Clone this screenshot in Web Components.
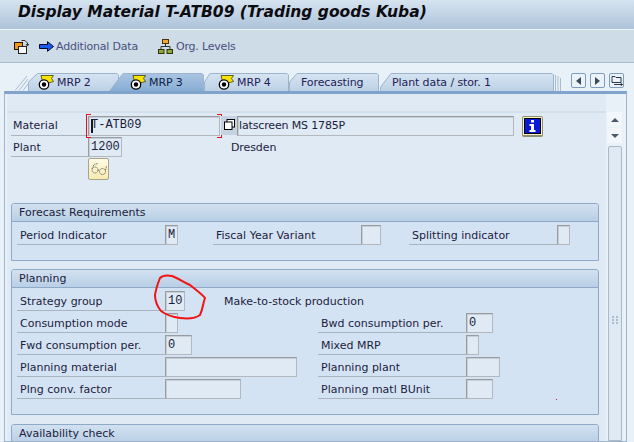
<!DOCTYPE html>
<html>
<head>
<meta charset="utf-8">
<style>
  html, body { margin: 0; padding: 0; width: 634px; height: 442px; overflow: hidden; background: #e8f0f8; }
  body { font: 11px "DejaVu Sans", sans-serif; color: #1c1c3c; }
</style>
</head>
<body>
<sap-screen>
  <sap-title slot="title">Display Material T-ATB09 (Trading goods Kuba)</sap-title>
  <sap-toolbar slot="toolbar"></sap-toolbar>
  <sap-tabs slot="tabs"></sap-tabs>
  <sap-header-block></sap-header-block>
  <sap-group heading="Forecast Requirements" style="height:58px">
    <div style="display:flex;padding-left:5px">
      <sap-field label="Period Indicator" w="13" value="M"></sap-field>
      <sap-field label="Fiscal Year Variant" w="20" style="margin-left:35px"></sap-field>
      <sap-field label="Splitting indicator" w="13" style="margin-left:28px"></sap-field>
    </div>
  </sap-group>
  <sap-group heading="Planning" style="height:146px;margin-top:8px">
    <div style="display:grid;grid-template-columns:301px 1fr;grid-auto-rows:22px;padding-left:5px">
      <div style="grid-column:1/3;display:flex">
        <sap-field label="Strategy group" w="20" value="10"></sap-field>
        <div style="margin-left:39px;line-height:22px">Make-to-stock production</div>
      </div>
      <sap-field label="Consumption mode" w="13"></sap-field>
      <sap-field label="Bwd consumption per." w="27" value="0"></sap-field>
      <sap-field label="Fwd consumption per." w="27" value="0"></sap-field>
      <sap-field label="Mixed MRP" w="13"></sap-field>
      <sap-field label="Planning material" w="132"></sap-field>
      <sap-field label="Planning plant" w="34"></sap-field>
      <sap-field label="Plng conv. factor" w="76"></sap-field>
      <sap-field label="Planning matl BUnit" w="27"></sap-field>
    </div>
  </sap-group>
  <sap-group heading="Availability check" style="height:30px;margin-top:9px"></sap-group>
</sap-screen>
<sap-mark></sap-mark>
<script>
function shadow(el, html) {
  el.attachShadow({ mode: "open" });
  el.shadowRoot.innerHTML = html;
}

const INPUT_CSS = `
  height: 20px; box-sizing: border-box; flex: none; background: #dfeaf4;
  border: 1px solid #b4b8bc; border-top-color: #979ca1; border-left-color: #979ca1;
  box-shadow: inset 1px 1px 0 #c6ced6;
  overflow: hidden; white-space: nowrap;
`;
const MONO = `"Liberation Mono", monospace`;

class SapScreen extends HTMLElement {
  constructor() {
    super();
    shadow(this, `
      <style>
        :host { display: block; width: 634px; height: 442px; overflow: hidden; }
        .panel {
          margin-left: 4px; width: 623px; height: 351px; box-sizing: border-box;
          background: #dfeaf5; border: 1px solid #9fb4cb; border-top: 3px solid #7fa3cb;
          display: flex; overflow: hidden;
        }
        .stripe { width: 2px; flex: none; background: #e8f0f8; }
        .body { width: 599px; flex: none; }
        .top { height: 17px; border-bottom: 2px solid #d2e0ee; }
        .inner { padding: 0 0 0 4px; width: 588px; }
      </style>
      <slot name="title"></slot>
      <slot name="toolbar"></slot>
      <slot name="tabs"></slot>
      <div class="panel">
        <div class="stripe"></div>
        <div class="body">
          <div class="top"></div>
          <div class="inner"><slot></slot></div>
        </div>
        <sap-scroll></sap-scroll>
      </div>`);
  }
}

class SapTitle extends HTMLElement {
  constructor() {
    super();
    shadow(this, `
      <style>
        :host {
          display: block; height: 30px; box-sizing: border-box; padding-left: 18px;
          background: linear-gradient(#d6e3f0, #adc3da);
          border-bottom: 1px solid #eef4fa;
          font: italic bold 15.5px/25px "DejaVu Sans", sans-serif; color: #0c0c10; white-space: nowrap;
        }
      </style><slot></slot>`);
  }
}

class SapToolbar extends HTMLElement {
  constructor() {
    super();
    shadow(this, `
      <style>
        :host {
          display: flex; align-items: center; height: 33px; box-sizing: border-box;
          background: #cedce8; border-bottom: 1px solid #a9bdd0; padding-left: 14px; color: #4a4e7c;
        }
        svg { display: block; flex: none; }
        span { letter-spacing: -.2px; }
      </style>
      <svg width="15" height="16" viewBox="0 0 15 16" style="margin-right:10px">
        <rect x=".5" y="4.500" width="8" height="7" fill="#f09a18" stroke="#201000"/>
        <rect x="4.500" y="8.500" width="8" height="7" fill="#f6f6f6" stroke="#202020"/>
        <path d="M7.500 2.500h3.500l2.500 2.500v2.500M12 6l1.500 2 1.500-2" fill="none" stroke="#303030"/>
      </svg>
      <svg width="15" height="11" viewBox="0 0 15 11">
        <path d="M.5 3.500h8V.7l6 4.800-6 4.800V7.500h-8z" fill="#1a5cf0" stroke="#000030"/>
      </svg>
      <span style="margin-left:2px">Additional Data</span>
      <svg width="15" height="15" viewBox="0 0 15 15" style="margin-left:20px">
        <rect x="4.500" y=".5" width="6" height="4" fill="#f0a830" stroke="#503000"/>
        <path d="M7.500 5v3M3 11V7.500h9V11" fill="none" stroke="#303030"/>
        <rect x=".5" y="10.500" width="5.500" height="4" fill="#90a838" stroke="#303000"/>
        <rect x="9" y="10.500" width="5.500" height="4" fill="#90a838" stroke="#303000"/>
      </svg>
      <span style="margin-left:3px">Org. Levels</span>`);
  }
}

class SapTabs extends HTMLElement {
  constructor() {
    super();
    // label, width, overlap with previous, corner dx, corner dy, padding, has icon, active
    const tab = (label, w, ml, dx, dy, pad, icon, active) => {
      const g = active ? "a" : "i";
      return `
      <div class="tab ${active ? "on" : ""}" style="width:${w}px;margin-left:${ml}px;padding-left:${pad}px">
        <svg class="bg" width="${w}" height="18"><path d="M.5 18V${dy}L${dx} .5H${w - 2}L${w - .5} 2V18" fill="url(#${g})" stroke="#9db4cc"/></svg>
        ${icon ? `<svg class="ic" width="16" height="15" viewBox="0 0 16 15"><path d="M3 .5H15.500L13.500 3.500 15.500 6.500 10 8V9H5z" fill="#f6e400" stroke="#302800" stroke-width=".7"/><circle cx="6" cy="9.500" r="4.700" fill="#fff" stroke="#000" stroke-width="1.300"/><circle cx="6" cy="9.500" r="2.200" fill="#000"/></svg>` : ""}
        <span>${label}</span>
      </div>`;
    };
    shadow(this, `
      <style>
        :host { display: flex; height: 28px; box-sizing: border-box; padding: 10px 10px 0 15px; align-items: flex-start; }
        .defs { width: 0; height: 0; position: absolute; }
        .tab {
          height: 18px; box-sizing: border-box; flex: none; position: relative;
          display: flex; align-items: center; gap: 3px; white-space: nowrap; color: #241c58;
        }
        .tab span { position: relative; letter-spacing: -.1px; }
        .tab .ic { position: relative; }
        .tab .bg { position: absolute; left: 0; top: 0; }
        .on { z-index: 1; color: #102048; }
        .stack { display: block; flex: none; }
        .nav { margin-left: auto; display: flex; gap: 4px; }
        .nav div {
          width: 15px; height: 15px; box-sizing: border-box; background: #ecf2f9;
          border: 1px solid #7f9cc0; border-radius: 2px;
          display: flex; align-items: center; justify-content: center;
        }
      </style>
      <svg class="defs"><defs>
        <linearGradient id="i" x1="0" y1="0" x2="0" y2="1"><stop offset="0" stop-color="#d6e4f2"/><stop offset="1" stop-color="#bdd1e6"/></linearGradient>
        <linearGradient id="a" x1="0" y1="0" x2="0" y2="1"><stop offset="0" stop-color="#aac5e2"/><stop offset="1" stop-color="#88add3"/></linearGradient>
      </defs></svg>
      <svg class="stack" width="13" height="18"><path d="M0 17.500 12 3M4 17.500 13 6M8 17.500 13 11" fill="none" stroke="#a9bcd2"/></svg>
      ${tab("MRP 2", 91, 0, 9.5, 9, 10, true)}
      ${tab("MRP 3", 95, -10, 14, 18, 21, true, true)}
      ${tab("MRP 4", 85, 0, 6, 9, 14, true)}
      ${tab("Forecasting", 90, 0, 8, 9, 12)}
      ${tab("Plant data / stor. 1", 174, 1, 11, 14, 12)}
      <svg class="stack" width="7" height="18"><path d="M1.500 2V18M4 3V18M6.500 5V18" fill="none" stroke="#a9bcd2"/></svg>
      <div class="nav">
        <div><svg width="5" height="8"><path d="M5 0v8L0 4z" fill="#3c4a5c"/></svg></div>
        <div><svg width="5" height="8"><path d="M0 0v8l5-4z" fill="#3c4a5c"/></svg></div>
        <div><svg width="12" height="11" viewBox="0 0 12 11"><path d="M1 3.500V1.500h3l1 1h5v5H1zM3 9.500h8.500M9.500 8l2 1.500-2 1.500" fill="none" stroke="#2c3844"/></svg></div>
      </div>`);
  }
}

class SapHeaderBlock extends HTMLElement {
  constructor() {
    super();
    shadow(this, `
      <style>
        :host { display: block; height: 90px; padding-top: 3px; box-sizing: border-box; }
        .row { display: flex; height: 21px; align-items: flex-start; }
        .lab { width: 77px; height: 20px; line-height: 19px; border-bottom: 1px solid #aab4bf; box-sizing: border-box; padding-left: 2px; flex: none; }
        .inp { ${INPUT_CSS} font: 12px/17px ${MONO}; padding-left: 2px; }
        .mat { width: 132px; position: relative; overflow: visible; }
        .mat::before { content: ""; position: absolute; left: -3px; top: -3px; width: 5px; height: 24px; border: solid #e01020; border-width: 1px 0 1px 1px; box-sizing: border-box; }
        .mat::after { content: ""; position: absolute; right: -3px; top: -3px; width: 5px; height: 24px; border: solid #e01020; border-width: 1px 1px 1px 0; box-sizing: border-box; }
        .caret { position: absolute; left: 2px; top: 2px; width: 2px; height: 14px; background: #10182c; }
        .copy { width: 16px; height: 19px; flex: none; background: #c4d2e2; display: flex; align-items: flex-start; justify-content: center; padding-top: 3px; box-sizing: border-box; margin-left: 1px; position: relative; }
        .desc { width: 277px; font: 11px/18px "DejaVu Sans", sans-serif; padding-left: 1px; letter-spacing: -.15px; }
        .info { width: 21px; height: 21px; box-sizing: border-box; margin-left: 8px; background: #fbf3c4; border: 1px solid #8f8f70; border-bottom-width: 2px; border-radius: 2px; display: flex; align-items: center; justify-content: center; }
        .glasses { display: flex; align-items: center; justify-content: center; width: 21px; height: 22px; box-sizing: border-box; margin-left: 77px; background: linear-gradient(#fffbe6, #f8eab0); border: 1px solid #a8a48c; border-radius: 2px; }
        .dres { margin-left: 109px; line-height: 21px; letter-spacing: -.1px; }
        .p .lab { line-height: 21px; }
        .p .inp { line-height: 19px; }
      </style>
      <div class="row">
        <div class="lab">Material</div>
        <div class="inp mat">T-ATB09<i class="caret"></i></div>
        <div class="copy"><svg width="11" height="11" viewBox="0 0 11 11"><rect x="3" y=".5" width="7.500" height="7.500" fill="#fff" stroke="#000"/><rect x=".5" y="3" width="7.500" height="7.500" fill="#fff" stroke="#000"/></svg></div>
        <div class="inp desc">latscreen MS 1785P</div>
        <div class="info"><svg width="17" height="16" viewBox="0 0 17 16"><rect width="17" height="16" fill="#000"/><rect x="1" y="1" width="15" height="14" fill="#0a18d8"/><path d="M7 2h3v2.500H7zM5.500 6H10v6h1.500v2h-6v-2H7V8H5.500z" fill="#fff"/></svg></div>
      </div>
      <div class="row p">
        <div class="lab">Plant</div>
        <div class="inp" style="width:34px">1200</div>
        <div class="dres">Dresden</div>
      </div>
      <div class="glasses"><svg width="17" height="13" viewBox="0 0 17 13"><g fill="none" stroke="#77736a" stroke-dasharray="1.200 .5"><circle cx="5" cy="7" r="3"/><circle cx="12.500" cy="8.500" r="3"/><path d="M8 7 9.500 7.500M15.500 7 16.500 3M2 6 4 1.500 8 .5"/></g></svg></div>`);
  }
}

class SapGroup extends HTMLElement {
  constructor() {
    super();
    shadow(this, `
      <style>
        :host { display: block; box-sizing: border-box; border: 1px solid #8fa9c8; border-radius: 3px 3px 0 0; background: #d4e3f4; overflow: hidden; width: 588px; }
        .h { height: 18px; box-sizing: border-box; line-height: 18px; padding-left: 7px; background: linear-gradient(#d2e1f0, #b9cfe6); border-bottom: 1px solid #8fa9c8; }
        .b { padding-top: 3px; }
      </style>
      <div class="h"></div>
      <div class="b"><slot></slot></div>`);
    this.shadowRoot.querySelector(".h").textContent = this.getAttribute("heading");
  }
}

class SapField extends HTMLElement {
  constructor() {
    super();
    const w = this.getAttribute("w");
    shadow(this, `
      <style>
        :host { display: flex; align-items: flex-start; height: 20px; flex: none; }
        .l { box-sizing: border-box; width: 148px; height: 20px; line-height: 21px; padding-left: 3px; border-bottom: 1px solid #aab4bf; flex: none; overflow: hidden; }
        .i { ${INPUT_CSS} font: 12px/19px ${MONO}; padding-left: 2px; }
      </style>
      <div class="l">${this.getAttribute("label")}</div>
      <div class="i" style="width:${w}px">${this.getAttribute("value") || ""}</div>`);
  }
}

class SapScroll extends HTMLElement {
  constructor() {
    super();
    shadow(this, `
      <style>
        :host { display: flex; flex-direction: column; width: 20px; flex: none; box-sizing: border-box; padding: 18px 0 0 1px; background: #e8f0f8; }
        .b { width: 15px; height: 15px; background: #f2f6fb; margin-bottom: 1px; display: flex; align-items: center; justify-content: center; }
        .t { width: 14px; flex: 1; box-sizing: border-box; margin: 2px 0 0 1px; background: #dfe9f3; border: 1px solid #a9b9ca; border-radius: 2px 2px 0 0; display: flex; justify-content: center; padding-top: 169px; }
      </style>
      <div class="b"><svg width="8" height="4"><path d="M0 4 4 0l4 4z" fill="#4a5868"/></svg></div>
      <div class="b"><svg width="8" height="4"><path d="M0 0l4 4 4-4z" fill="#4a5868"/></svg></div>
      <div class="t"><svg width="6" height="8"><path d="M0 0h2v2H0zM4 0h2v2H4zM0 3h2v2H0zM4 3h2v2H4zM0 6h2v2H0zM4 6h2v2H4z" fill="#a9bccf"/></svg></div>`);
  }
}

// hand drawn circle around strategy group, lies over the form
class SapMark extends HTMLElement {
  constructor() {
    super();
    shadow(this, `
      <style>
        :host { position: absolute; left: 0; top: 0; width: 634px; height: 442px; pointer-events: none; }
        svg { display: block; }
      </style>
      <svg width="634" height="442">
        <path d="M160 278C163 275 167 275 172 276 178 278 183 282 190 285 196 290 202 294 205 298 203 303 203 309 200 315 196 318 188 319 180 318 172 317 165 314 161 311 157 306 155 300 155 295 156 288 158 283 160 278Z" fill="none" stroke="#f01414" stroke-width="2"/>
        <rect x="556" y="399" width="1" height="1" fill="#e01020"/>
      </svg>`);
  }
}

customElements.define("sap-screen", SapScreen);
customElements.define("sap-title", SapTitle);
customElements.define("sap-toolbar", SapToolbar);
customElements.define("sap-tabs", SapTabs);
customElements.define("sap-header-block", SapHeaderBlock);
customElements.define("sap-group", SapGroup);
customElements.define("sap-field", SapField);
customElements.define("sap-scroll", SapScroll);
customElements.define("sap-mark", SapMark);
</script>
</body>
</html>
